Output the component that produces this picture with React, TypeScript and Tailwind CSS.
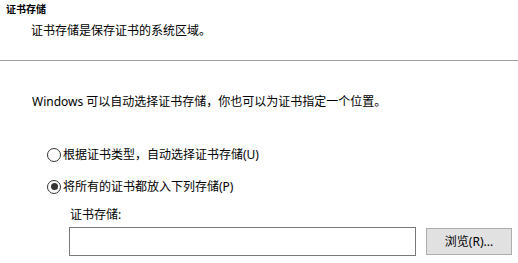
import { useState } from "react";

const FONT = { fontFamily: '"Segoe UI", "Noto Sans", "Noto Sans CJK SC", sans-serif' };

function Radio({ checked, label, onClick }: { checked: boolean; label: string; onClick: () => void }) {
  return (
    <button type="button" onClick={onClick} className="flex h-[17px] items-center pl-[47px] text-left">
      <span className="flex h-[14px] w-[14px] items-center justify-center rounded-full border border-[#333333] bg-white">
        {checked && <span className="h-[7px] w-[7px] rounded-full bg-[#333333]" />}
      </span>
      <span className="ml-[2px] text-[12px] leading-[17px] text-black">{label}</span>
    </button>
  );
}

export default function App() {
  const [mode, setMode] = useState<"auto" | "manual">("manual");
  const [store, setStore] = useState("");

  return (
    <div className="flex h-[263px] w-[518px] flex-col overflow-hidden bg-white text-black" style={FONT}>
      <div className="pl-[6px] pt-[2px] text-[10px] font-bold leading-[14px]">证书存储</div>
      <div className="mt-[6px] pl-[31px] text-[12px] leading-[17px]">证书存储是保存证书的系统区域。</div>
      <div className="mt-[21px] h-px bg-[#a0a0a0]" />

      <div className="mt-[32px] pl-[32px] text-[12px] leading-[17px]">
        Windows 可以自动选择证书存储，你也可以为证书指定一个位置。
      </div>

      <div className="mt-[36px]">
        <Radio checked={mode === "auto"} label="根据证书类型，自动选择证书存储(U)" onClick={() => setMode("auto")} />
      </div>
      <div className="mt-[15px]">
        <Radio checked={mode === "manual"} label="将所有的证书都放入下列存储(P)" onClick={() => setMode("manual")} />
      </div>

      <div className="mt-[11px] pl-[70px] text-[12px] leading-[17px]">证书存储:</div>
      <div className="mt-[4px] flex items-center pl-[69px]">
        <input
          value={store}
          onChange={(e) => setStore(e.target.value)}
          className="h-[29px] w-[347px] border border-[#7a7a7a] bg-white px-1 text-[12px] outline-none"
        />
        <button
          type="button"
          className="ml-[10px] h-[27px] w-[86px] border border-[#adadad] bg-[#e1e1e1] text-[12px] leading-none text-black"
        >
          浏览(R)...
        </button>
      </div>
    </div>
  );
}
